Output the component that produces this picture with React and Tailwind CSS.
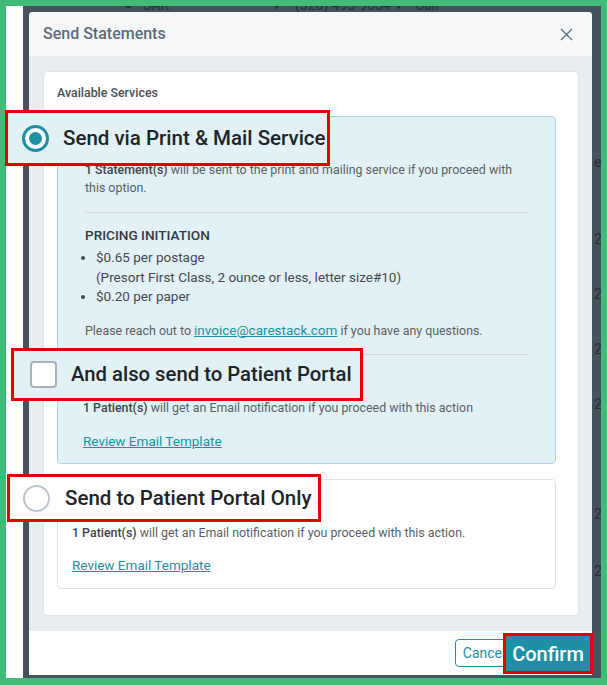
import React from 'react';

const TEAL = '#1f8fa3';

function BigRadio({ checked }) {
    return (
        <span
            className={`w-[27px] h-[27px] rounded-full flex items-center justify-center flex-shrink-0 bg-white ${checked ? 'border-[3px] border-[#1f8fa3]' : 'border-2 border-[#bcc5cd]'}`}
        >
            {checked && <span className="w-[13px] h-[13px] rounded-full bg-[#1f8fa3]" />}
        </span>
    );
}

export default function App() {
    return (
        <div className="relative w-[607px] h-[685px] bg-[#41bc78] pt-[6px] pl-[6px] pr-[6px] pb-[7px] font-['Roboto','Liberation_Sans',sans-serif] overflow-hidden">
            <div className="flex h-full">
                <div className="w-[17px] bg-white" />

                {/* Backdrop */}
                <div className="relative flex-1 bg-[#47525e] pt-[6px] pl-[6px] pr-[9px] pb-[3px] overflow-hidden">
                    {/* page behind the backdrop */}
                    <div className="absolute left-0 top-[-9px] w-full h-[16px] text-[14px] leading-[16px] text-[#262e36]">
                        <span className="absolute left-[101px] top-[2px] w-[9px] h-[9px] rounded-full bg-[#262e36]" />
                        <span className="absolute left-[120px]">SAR</span>
                        <span className="absolute left-[250px]">▾</span>
                        <span className="absolute left-[272px]">(320) 493-9654</span>
                        <span className="absolute left-[372px]">▾</span>
                        <span className="absolute left-[392px]">Call</span>
                    </div>
                    <div className="absolute left-[571px] top-0 w-[10px] h-full text-[14px] leading-[16px] text-[#262e36]">
                        <span className="absolute top-[148px]">e</span>
                        <span className="absolute top-[225px]">20</span>
                        <span className="absolute top-[280px]">20</span>
                        <span className="absolute top-[335px]">20</span>
                        <span className="absolute top-[390px]">20</span>
                        <span className="absolute top-[500px]">20</span>
                        <span className="absolute top-[557px]">20</span>
                    </div>

                    {/* Modal */}
                    <div className="relative flex flex-col h-full bg-white rounded-t-[4px] overflow-hidden">
                        <div className="h-[44px] flex-shrink-0 bg-[#f5f7f9] flex items-center justify-between pl-[14px] pr-[19px]">
                            <span className="text-[16px] font-medium text-[#5d6b7a]">Send Statements</span>
                            <svg width="13" height="13" viewBox="0 0 13 13">
                                <path d="M1 1 L12 12 M12 1 L1 12" stroke="#5f7285" strokeWidth="1.4" />
                            </svg>
                        </div>

                        <div className="flex-1 bg-[#e9edf0] pl-[14px] pr-[13px] pt-[15px] pb-[15px]">
                            <div className="h-full bg-white border border-[#dfe4e8] rounded-[4px] pl-[13px] pr-[22px] pt-[13px]">
                                <p className="text-[12.4px] leading-[16px] font-medium text-[#4a4f55]">
                                    Available Services
                                </p>

                                {/* Print & mail */}
                                <div className="mt-[15px] bg-[#e2f1f6] border border-[#a9d4dd] rounded-[4px] pl-[27px] pr-[27px] pb-[13px]">
                                    <div className="h-[44px] flex items-center gap-2 -ml-[14px]">
                                        <BigRadio checked />
                                        <span className="text-[15px] font-medium text-[#222]">Send via Print &amp; Mail Service</span>
                                    </div>
                                    <p className="text-[12.4px] leading-[18px] text-[#5a5f66] whitespace-nowrap">
                                        <span className="font-medium text-[#3f4449]">1 Statement(s)</span> will be sent to the print and mailing service if you proceed with
                                        <br />
                                        this option.
                                    </p>
                                    <div className="mt-[15px] h-px bg-[#d3d6d9]" />
                                    <p className="mt-[13px] text-[13.6px] leading-[18px] font-medium text-[#34393e]">
                                        PRICING INITIATION
                                    </p>
                                    <ul className="mt-[4px] list-disc pl-[11px] text-[13.5px] leading-[19.5px] text-[#44494e]">
                                        <li>
                                            $0.65 per postage
                                            <br />
                                            (Presort First Class, 2 ounce or less, letter size#10)
                                        </li>
                                        <li>$0.20 per paper</li>
                                    </ul>
                                    <p className="mt-[14px] text-[12.4px] leading-[18px] text-[#5a5f66] whitespace-nowrap">
                                        Please reach out to{' '}
                                        <span className="text-[13.5px] text-[#1f8fa3] underline">invoice@carestack.com</span>{' '}
                                        if you have any questions.
                                    </p>
                                    <div className="mt-[14px] h-px bg-[#d3d6d9]" />
                                    <div className="h-[44px] flex items-center gap-2 -ml-[14px]">
                                        <span className="w-[16px] h-[16px] rounded-[3px] border border-[#a8b0b8] bg-white" />
                                        <span className="text-[15px] font-medium text-[#222]">And also send to Patient Portal</span>
                                    </div>
                                    <div className="-ml-[2px]">
                                        <p className="text-[12.4px] leading-[18px] text-[#5a5f66] whitespace-nowrap">
                                            <span className="font-medium text-[#3f4449]">1 Patient(s)</span> will get an Email notification if you proceed with this action
                                        </p>
                                        <p className="mt-[15px] text-[13.5px] leading-[18px] text-[#1f8fa3] underline">
                                            Review Email Template
                                        </p>
                                    </div>
                                </div>

                                {/* Portal only */}
                                <div className="mt-[15px] bg-white border border-[#dde2e6] rounded-[4px] pl-[14px] pr-[14px] pb-[14px]">
                                    <div className="h-[44px] flex items-center gap-2">
                                        <BigRadio />
                                        <span className="text-[15px] font-medium text-[#222]">Send to Patient Portal Only</span>
                                    </div>
                                    <p className="text-[12.4px] leading-[18px] text-[#5a5f66] whitespace-nowrap">
                                        <span className="font-medium text-[#3f4449]">1 Patient(s)</span> will get an Email notification if you proceed with this action.
                                    </p>
                                    <p className="mt-[14px] text-[13.5px] leading-[18px] text-[#1f8fa3] underline">
                                        Review Email Template
                                    </p>
                                </div>
                            </div>
                        </div>

                        <div className="h-[44px] flex-shrink-0 bg-white flex items-center justify-end gap-[2px] pr-[7px]">
                            <button className="h-[28px] px-[7px] border border-[#1f8fa3] rounded-[4px] text-[14px] text-[#1f8fa3] bg-white">
                                Cancel
                            </button>
                            <button className="h-[28px] px-[10px] rounded-[4px] text-[14px] text-white bg-[#1f8fa3]">
                                Confirm
                            </button>
                        </div>
                    </div>
                </div>
            </div>

            {/* Callouts */}
            <div className="absolute left-[5px] top-[110px] w-[325px] h-[56px] border-[3px] border-[#e30000] bg-[#e2f1f6] flex items-center pl-[14px] gap-[14px]">
                <BigRadio checked />
                <span className="text-[20.5px] font-medium text-[#202428] whitespace-nowrap">Send via Print &amp; Mail Service</span>
            </div>
            <div className="absolute left-[11px] top-[348px] w-[352px] h-[53px] border-[3px] border-[#e30000] bg-[#e2f1f6] flex items-center pl-[16px] gap-[14px]">
                <span className="w-[27px] h-[27px] rounded-[4px] border-2 border-[#a8b0b8] bg-white flex-shrink-0" />
                <span className="text-[20.3px] font-medium text-[#202428] whitespace-nowrap">And also send to Patient Portal</span>
            </div>
            <div className="absolute left-[7px] top-[474px] w-[314px] h-[48px] border-[3px] border-[#e30000] bg-white flex items-center pl-[13px] gap-[15px]">
                <BigRadio />
                <span className="text-[20.5px] font-medium text-[#202428] whitespace-nowrap">Send to Patient Portal Only</span>
            </div>
            <div
                className="absolute left-[503px] top-[633px] w-[90px] h-[41px] border-[3px] border-[#e30000] flex items-center justify-center text-[20px] font-medium text-white"
                style={{ background: TEAL }}
            >
                Confirm
            </div>
        </div>
    );
}
